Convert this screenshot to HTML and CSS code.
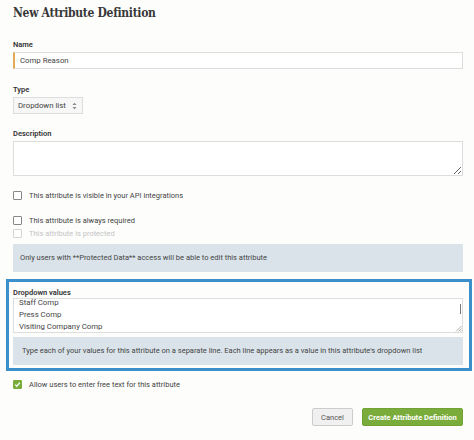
FILE: index.html
```html
<!DOCTYPE html>
<html lang="en">
<head>
    <meta charset="UTF-8">
    <meta name="viewport" content="width=device-width, initial-scale=1.0">
    <title>New Attribute Definition</title>
    <link rel="stylesheet" href="styles.css">
</head>
<body>

    <div class="page">
        <h1 class="title">New Attribute Definition</h1>

        <!-- Name -->
        <div class="field field-name">
            <label class="field-label" for="name">Name</label>
            <input class="text-input name-input" type="text" id="name" value="Comp Reason">
        </div>

        <!-- Type -->
        <div class="field field-type">
            <label class="field-label">Type</label>
            <div class="select-box">
                <span>Dropdown list</span>
                <svg class="select-arrows" width="5" height="8" viewBox="0 0 5 8">
                    <path d="M0.5 3 L2.5 0.8 L4.5 3 Z" fill="#888"/>
                    <path d="M0.5 5 L2.5 7.2 L4.5 5 Z" fill="#888"/>
                </svg>
            </div>
        </div>

        <!-- Description -->
        <div class="field field-desc">
            <label class="field-label" for="desc">Description</label>
            <textarea class="text-area desc-area" id="desc"></textarea>
        </div>

        <div class="check-row row-api">
            <span class="check"></span>
            <span>This attribute is visible in your API integrations</span>
        </div>
        <div class="check-row row-required">
            <span class="check"></span>
            <span>This attribute is always required</span>
        </div>
        <div class="check-row row-protected disabled">
            <span class="check"></span>
            <span>This attribute is protected</span>
        </div>

        <div class="info-box info-protected">
            Only users with **Protected Data** access will be able to edit this attribute
        </div>
    </div>

    <!-- hervorgehobener Bereich -->
    <div class="highlight">
        <div class="highlight-inner">
            <label class="field-label" for="values">Dropdown values</label>
            <div class="values-wrap">
                <div class="text-area values-area" id="values">
                    <div>Staff Comp</div>
                    <div>Press Comp</div>
                    <div>Visiting Company Comp</div>
                </div>
                <span class="scroll-thumb"></span>
                <svg class="grip" width="7" height="7" viewBox="0 0 7 7">
                    <path d="M6.5 1 L1 6.5 M6.5 3.5 L3.5 6.5 M6.5 5.5 L5.5 6.5" stroke="#999" stroke-width="0.8"/>
                </svg>
            </div>
            <div class="info-box info-values">
                Type each of your values for this attribute on a separate line. Each line appears as a value in this attribute's dropdown list
            </div>
        </div>
    </div>

    <div class="page">
        <div class="check-row row-free">
            <span class="check checked">
                <svg width="7" height="7" viewBox="0 0 7 7">
                    <path d="M1.2 3.6 L2.8 5.2 L5.8 1.6" stroke="#fff" stroke-width="1.3" fill="none"/>
                </svg>
            </span>
            <span>Allow users to enter free text for this attribute</span>
        </div>

        <div class="actions">
            <button class="btn btn-cancel">Cancel</button>
            <button class="btn btn-create">Create Attribute Definition</button>
        </div>
    </div>

</body>
</html>
```

FILE: styles.css
```css
body {
    margin: 0;
    background-color: #fdfdfc;
    font-family: Roboto, "Liberation Sans", sans-serif;
    font-size: 7.5px;
    color: #444;
}

.page {
    padding: 0 11px 0 13px;
}

.title {
    margin: 0;
    padding-top: 4px;
    font-family: "DejaVu Serif", serif;
    font-stretch: condensed;
    font-size: 12px;
    letter-spacing: -0.3px;
    line-height: 18px;
    font-weight: bold;
    color: #383838;
}

/* Formularfelder */
.field-label {
    display: block;
    height: 10px;
    line-height: 10px;
    margin-bottom: 2px;
    font-weight: 600;
    color: #333;
}

.field-name {
    margin-top: 18px;
}

.field-type {
    margin-top: 16px;
}

.field-desc {
    margin-top: 15px;
}

.text-input {
    display: block;
    width: 100%;
    height: 17px;
    box-sizing: border-box;
    border: 1px solid #ddd;
    background: #fff;
    font-family: inherit;
    font-size: 7.8px;
    color: #444;
    padding: 0 5px;
    margin: 0;
    outline: none;
}

.name-input {
    border-left: 2px solid #e3aa55;
}

.select-box {
    display: flex;
    align-items: center;
    justify-content: space-between;
    width: 70px;
    height: 17px;
    box-sizing: border-box;
    border: 1px solid #ddd;
    background: #f7f7f7;
    padding: 0 5px 0 4px;
    font-size: 7.8px;
    color: #444;
}

.text-area {
    display: block;
    width: 100%;
    box-sizing: border-box;
    border: 1px solid #ddd;
    background: #fff;
    margin: 0;
    outline: none;
    font-family: inherit;
    font-size: 7.8px;
    color: #444;
}

.desc-area {
    height: 35px;
    resize: vertical;
}

/* Checkboxen */
.check-row {
    display: flex;
    align-items: center;
    height: 10px;
}

.check {
    display: flex;
    align-items: center;
    justify-content: center;
    width: 9px;
    height: 9px;
    box-sizing: border-box;
    border: 1px solid #888;
    border-radius: 1px;
    background: #fff;
    margin-right: 7px;
}

.row-api {
    margin-top: 14px;
}

.row-required {
    margin-top: 15px;
}

.row-protected {
    margin-top: 3px;
}

.disabled {
    color: #c4c4c4;
}

.disabled .check {
    border-color: #d6d6d6;
}

.info-box {
    background-color: #dae3ea;
    color: #444;
}

.info-protected {
    margin-top: 6px;
    height: 28px;
    line-height: 28px;
    padding-left: 7px;
}

/* Blauer Rahmen */
.highlight {
    margin: 7px 2px 0 6px;
    border: 3px solid #3b8fcb;
}

.highlight-inner {
    padding: 6px 6px 3px 4px;
}

.values-wrap {
    position: relative;
}

.values-area {
    height: 35px;
    overflow: hidden;
    padding: 0 5px;
    line-height: 12px;
    margin-top: -2px;
}

.values-area div:first-child {
    margin-top: -2px;
}

.scroll-thumb {
    position: absolute;
    right: 2px;
    top: 6px;
    width: 1px;
    height: 10px;
    background: #777;
}

.grip {
    position: absolute;
    right: 1px;
    bottom: 1px;
}

.info-values {
    margin-top: 4px;
    height: 28px;
    line-height: 28px;
    padding-left: 9px;
}

.row-free {
    margin-top: 8px;
}

.check.checked {
    background-color: #7aac3c;
    border-color: #7aac3c;
}

/* Buttons */
.actions {
    display: flex;
    justify-content: flex-end;
    margin-top: 19px;
}

.btn {
    height: 18px;
    box-sizing: border-box;
    border-radius: 2px;
    font-family: inherit;
    font-size: 7.5px;
    padding: 0;
    cursor: pointer;
}

.btn-cancel {
    width: 41px;
    background: #f0f0f0;
    border: 1px solid #ccc;
    color: #555;
    margin-right: 9px;
}

.btn-create {
    width: 101px;
    background: #7aac3c;
    border: 1px solid #72a236;
    color: #fff;
    font-weight: bold;
}
```
